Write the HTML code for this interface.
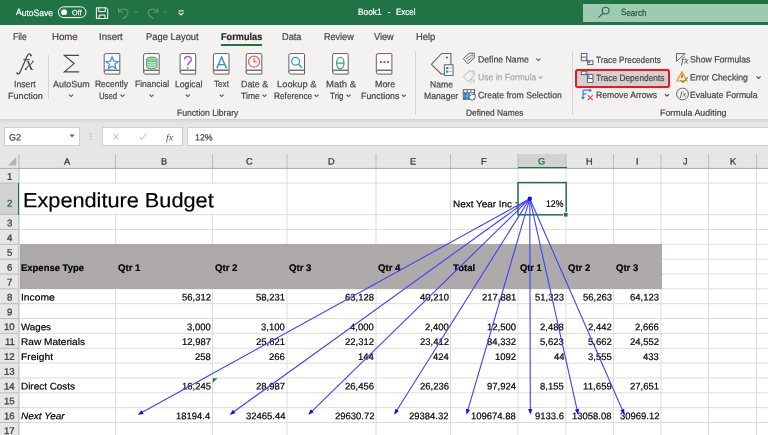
<!DOCTYPE html>
<html lang="en">
<head>
<meta charset="utf-8">
<title>Book1 - Excel</title>
<style>
html,body{margin:0;padding:0}
body{width:768px;height:435px;overflow:hidden;position:relative;background:#fff;font-family:"Liberation Sans",sans-serif;}
.a{position:absolute}
.t{position:absolute;white-space:pre;transform-origin:0 0;}
#w{position:absolute;left:0;top:0;width:768px;height:435px;overflow:hidden;will-change:transform;text-rendering:geometricPrecision;}
svg{position:absolute;overflow:visible}

</style>
</head>
<body>
<div id="w">
<div class="a" style="left:0px;top:0px;width:768px;height:25px;background:#217346;"></div>
<div class="a" style="left:583.3px;top:4px;width:184.7px;height:17.5px;background:#9ccbb1;"></div>
<div class="a" style="left:0px;top:25px;width:768px;height:93.6px;background:#f3f2f1;"></div>
<div class="a" style="left:0px;top:118.6px;width:768px;height:50.4px;background:#e6e6e6;"></div>
<div class="a" style="left:0px;top:118.6px;width:768px;height:5.4px;background:linear-gradient(#cfcecd,#dddcdc 35%,#e6e6e6);"></div>
<div class="a" style="left:220.7px;top:43.8px;width:41.3px;height:2.0px;background:#217346;"></div>
<div class="a" style="left:47.5px;top:55px;width:1.0px;height:44px;background:#d6d4d2;"></div>
<div class="a" style="left:415px;top:51px;width:1px;height:64px;background:#d6d4d2;"></div>
<div class="a" style="left:572px;top:51px;width:1px;height:64px;background:#d6d4d2;"></div>
<div class="a" style="left:574.6px;top:68.6px;width:95.2px;height:19.4px;background:#d3d1cf;box-sizing:border-box;border:2.1px solid #f8121c;border-radius:2.5px;"></div>
<div class="a" style="left:4px;top:127.3px;width:75.5px;height:18.7px;background:#fff;box-sizing:border-box;border:1px solid #cfcfcf;"></div>
<div class="a" style="left:102.4px;top:127.3px;width:81.0px;height:18.7px;background:#fff;box-sizing:border-box;border:1px solid #cfcfcf;"></div>
<div class="a" style="left:186.8px;top:127.3px;width:588.2px;height:18.7px;background:#fff;box-sizing:border-box;border:1px solid #cfcfcf;"></div>
<div class="a" style="left:0px;top:168px;width:19px;height:267px;background:#e6e6e6;"></div>
<div class="a" style="left:518px;top:154px;width:48px;height:14px;background:#d2d2d2;"></div>
<div class="a" style="left:0px;top:183.1px;width:19px;height:31.5px;background:#d2d2d2;"></div>
<svg width="768" height="435" viewBox="0 0 768 435" style="left:0;top:0"><line x1="115.5" y1="154.2" x2="115.5" y2="168" stroke="#bcbcbc" stroke-width="1"/><line x1="115.5" y1="169" x2="115.5" y2="435" stroke="#dddddd" stroke-width="1"/><line x1="212.5" y1="154.2" x2="212.5" y2="168" stroke="#bcbcbc" stroke-width="1"/><line x1="212.5" y1="169" x2="212.5" y2="435" stroke="#dddddd" stroke-width="1"/><line x1="287" y1="154.2" x2="287" y2="168" stroke="#bcbcbc" stroke-width="1"/><line x1="287" y1="169" x2="287" y2="435" stroke="#dddddd" stroke-width="1"/><line x1="376" y1="154.2" x2="376" y2="168" stroke="#bcbcbc" stroke-width="1"/><line x1="376" y1="169" x2="376" y2="435" stroke="#dddddd" stroke-width="1"/><line x1="450.5" y1="154.2" x2="450.5" y2="168" stroke="#bcbcbc" stroke-width="1"/><line x1="450.5" y1="169" x2="450.5" y2="435" stroke="#dddddd" stroke-width="1"/><line x1="518" y1="154.2" x2="518" y2="168" stroke="#bcbcbc" stroke-width="1"/><line x1="518" y1="169" x2="518" y2="435" stroke="#dddddd" stroke-width="1"/><line x1="566" y1="154.2" x2="566" y2="168" stroke="#bcbcbc" stroke-width="1"/><line x1="566" y1="169" x2="566" y2="435" stroke="#dddddd" stroke-width="1"/><line x1="613.5" y1="154.2" x2="613.5" y2="168" stroke="#bcbcbc" stroke-width="1"/><line x1="613.5" y1="169" x2="613.5" y2="435" stroke="#dddddd" stroke-width="1"/><line x1="661" y1="154.2" x2="661" y2="168" stroke="#bcbcbc" stroke-width="1"/><line x1="661" y1="169" x2="661" y2="435" stroke="#dddddd" stroke-width="1"/><line x1="708.6" y1="154.2" x2="708.6" y2="168" stroke="#bcbcbc" stroke-width="1"/><line x1="708.6" y1="169" x2="708.6" y2="435" stroke="#dddddd" stroke-width="1"/><line x1="756.6" y1="154.2" x2="756.6" y2="168" stroke="#bcbcbc" stroke-width="1"/><line x1="756.6" y1="169" x2="756.6" y2="435" stroke="#dddddd" stroke-width="1"/><line x1="0" y1="183.1" x2="18.5" y2="183.1" stroke="#bcbcbc" stroke-width="1"/><line x1="19.5" y1="183.1" x2="768" y2="183.1" stroke="#dddddd" stroke-width="1"/><line x1="0" y1="214.6" x2="18.5" y2="214.6" stroke="#bcbcbc" stroke-width="1"/><line x1="19.5" y1="214.6" x2="768" y2="214.6" stroke="#dddddd" stroke-width="1"/><line x1="0" y1="229.45" x2="18.5" y2="229.45" stroke="#bcbcbc" stroke-width="1"/><line x1="19.5" y1="229.45" x2="768" y2="229.45" stroke="#dddddd" stroke-width="1"/><line x1="0" y1="244.3" x2="18.5" y2="244.3" stroke="#bcbcbc" stroke-width="1"/><line x1="19.5" y1="244.3" x2="768" y2="244.3" stroke="#dddddd" stroke-width="1"/><line x1="0" y1="259.15" x2="18.5" y2="259.15" stroke="#bcbcbc" stroke-width="1"/><line x1="19.5" y1="259.15" x2="768" y2="259.15" stroke="#dddddd" stroke-width="1"/><line x1="0" y1="274.0" x2="18.5" y2="274.0" stroke="#bcbcbc" stroke-width="1"/><line x1="19.5" y1="274.0" x2="768" y2="274.0" stroke="#dddddd" stroke-width="1"/><line x1="0" y1="288.85" x2="18.5" y2="288.85" stroke="#bcbcbc" stroke-width="1"/><line x1="19.5" y1="288.85" x2="768" y2="288.85" stroke="#dddddd" stroke-width="1"/><line x1="0" y1="303.7" x2="18.5" y2="303.7" stroke="#bcbcbc" stroke-width="1"/><line x1="19.5" y1="303.7" x2="768" y2="303.7" stroke="#dddddd" stroke-width="1"/><line x1="0" y1="318.55" x2="18.5" y2="318.55" stroke="#bcbcbc" stroke-width="1"/><line x1="19.5" y1="318.55" x2="768" y2="318.55" stroke="#dddddd" stroke-width="1"/><line x1="0" y1="333.4" x2="18.5" y2="333.4" stroke="#bcbcbc" stroke-width="1"/><line x1="19.5" y1="333.4" x2="768" y2="333.4" stroke="#dddddd" stroke-width="1"/><line x1="0" y1="348.25" x2="18.5" y2="348.25" stroke="#bcbcbc" stroke-width="1"/><line x1="19.5" y1="348.25" x2="768" y2="348.25" stroke="#dddddd" stroke-width="1"/><line x1="0" y1="363.1" x2="18.5" y2="363.1" stroke="#bcbcbc" stroke-width="1"/><line x1="19.5" y1="363.1" x2="768" y2="363.1" stroke="#dddddd" stroke-width="1"/><line x1="0" y1="377.95" x2="18.5" y2="377.95" stroke="#bcbcbc" stroke-width="1"/><line x1="19.5" y1="377.95" x2="768" y2="377.95" stroke="#dddddd" stroke-width="1"/><line x1="0" y1="392.8" x2="18.5" y2="392.8" stroke="#bcbcbc" stroke-width="1"/><line x1="19.5" y1="392.8" x2="768" y2="392.8" stroke="#dddddd" stroke-width="1"/><line x1="0" y1="407.65" x2="18.5" y2="407.65" stroke="#bcbcbc" stroke-width="1"/><line x1="19.5" y1="407.65" x2="768" y2="407.65" stroke="#dddddd" stroke-width="1"/><line x1="0" y1="422.5" x2="18.5" y2="422.5" stroke="#bcbcbc" stroke-width="1"/><line x1="19.5" y1="422.5" x2="768" y2="422.5" stroke="#dddddd" stroke-width="1"/><line x1="0" y1="437.35" x2="18.5" y2="437.35" stroke="#bcbcbc" stroke-width="1"/><line x1="19.5" y1="437.35" x2="768" y2="437.35" stroke="#dddddd" stroke-width="1"/><line x1="0" y1="452.2" x2="18.5" y2="452.2" stroke="#bcbcbc" stroke-width="1"/><line x1="19.5" y1="452.2" x2="768" y2="452.2" stroke="#dddddd" stroke-width="1"/><line x1="19" y1="154.2" x2="19" y2="435" stroke="#b4b4b4" stroke-width="1"/><line x1="0" y1="168.4" x2="768" y2="168.4" stroke="#a9a9a9" stroke-width="1"/></svg>
<div class="a" style="left:100px;top:183.6px;width:130px;height:30.5px;background:#fff;"></div>
<div class="a" style="left:19.5px;top:244px;width:642.0px;height:45px;background:#aeaaaa;"></div>
<div class="a" style="left:518px;top:166.6px;width:48.5px;height:1.8px;background:#217346;"></div>
<div class="a" style="left:17.8px;top:183.1px;width:1.7px;height:32.0px;background:#217346;"></div>
<span class="t" style="left:16.00px;top:7.25px;font-size:9.2px;line-height:10px;color:#fff;-webkit-text-stroke:0.2px #fff;transform:translateY(0.50px) rotate(0.03deg) scaleX(0.9286);">AutoSave</span>
<span class="t" style="left:72.30px;top:8.25px;font-size:7.6px;line-height:9px;color:#fff;-webkit-text-stroke:0.2px #fff;transform:translateY(0.25px) rotate(0.03deg) scaleX(0.9500);">Off</span>
<span class="t" style="left:358.40px;top:7.25px;font-size:9.2px;line-height:10px;color:#fff;-webkit-text-stroke:0.2px #fff;transform:translateY(0.25px) rotate(0.03deg) scaleX(0.9055);">Book1</span>
<span class="t" style="left:387.90px;top:7.25px;font-size:9.2px;line-height:10px;color:#fff;-webkit-text-stroke:0.2px #fff;transform:translateY(0.25px) rotate(0.03deg) scaleX(0.7837);">-</span>
<span class="t" style="left:395.80px;top:7.25px;font-size:9.2px;line-height:10px;color:#fff;-webkit-text-stroke:0.2px #fff;transform:translateY(0.25px) rotate(0.03deg) scaleX(0.8679);">Excel</span>
<span class="t" style="left:620.70px;top:7.25px;font-size:9.2px;line-height:10px;color:#1d5436;-webkit-text-stroke:0.2px #1d5436;transform:translateY(0.50px) rotate(0.03deg) scaleX(0.8790);">Search</span>
<span class="t" style="left:12.70px;top:32.25px;font-size:9.9px;line-height:11px;color:#444444;-webkit-text-stroke:0.2px #444444;transform:translateY(0.00px) rotate(0.03deg) scaleX(0.8542);">File</span>
<span class="t" style="left:51.70px;top:32.25px;font-size:9.9px;line-height:11px;color:#444444;-webkit-text-stroke:0.2px #444444;transform:translateY(0.00px) rotate(0.03deg) scaleX(0.9718);">Home</span>
<span class="t" style="left:99.00px;top:32.25px;font-size:9.9px;line-height:11px;color:#444444;-webkit-text-stroke:0.2px #444444;transform:translateY(0.00px) rotate(0.03deg) scaleX(0.9594);">Insert</span>
<span class="t" style="left:146.00px;top:32.25px;font-size:9.9px;line-height:11px;color:#444444;-webkit-text-stroke:0.2px #444444;transform:translateY(0.00px) rotate(0.03deg) scaleX(0.9501);">Page Layout</span>
<span class="t" style="left:282.30px;top:32.25px;font-size:9.9px;line-height:11px;color:#444444;-webkit-text-stroke:0.2px #444444;transform:translateY(0.00px) rotate(0.03deg) scaleX(0.9300);">Data</span>
<span class="t" style="left:324.00px;top:32.25px;font-size:9.9px;line-height:11px;color:#444444;-webkit-text-stroke:0.2px #444444;transform:translateY(0.00px) rotate(0.03deg) scaleX(0.9169);">Review</span>
<span class="t" style="left:374.30px;top:32.25px;font-size:9.9px;line-height:11px;color:#444444;-webkit-text-stroke:0.2px #444444;transform:translateY(0.00px) rotate(0.03deg) scaleX(0.9277);">View</span>
<span class="t" style="left:415.70px;top:32.25px;font-size:9.9px;line-height:11px;color:#444444;-webkit-text-stroke:0.2px #444444;transform:translateY(0.00px) rotate(0.03deg) scaleX(0.9502);">Help</span>
<span class="t" style="left:220.70px;top:32.25px;font-size:9.9px;line-height:11px;color:#252423;-webkit-text-stroke:0.2px #252423;font-weight:700;transform:translateY(0.00px) rotate(0.03deg) scaleX(0.9291);">Formulas</span>
<span class="t" style="left:14.10px;top:79.25px;font-size:9.2px;line-height:10px;color:#444444;-webkit-text-stroke:0.2px #444444;transform:translateY(0.25px) rotate(0.03deg) scaleX(0.9441);">Insert</span>
<span class="t" style="left:7.60px;top:90.25px;font-size:9.2px;line-height:10px;color:#444444;-webkit-text-stroke:0.2px #444444;transform:translateY(1.00px) rotate(0.03deg) scaleX(0.9901);">Function</span>
<span class="t" style="left:53.10px;top:79.25px;font-size:9.2px;line-height:10px;color:#444444;-webkit-text-stroke:0.2px #444444;transform:translateY(0.25px) rotate(0.03deg) scaleX(0.9683);">AutoSum</span>
<span class="t" style="left:95.40px;top:79.25px;font-size:9.2px;line-height:10px;color:#444444;-webkit-text-stroke:0.2px #444444;transform:translateY(0.25px) rotate(0.03deg) scaleX(0.9231);">Recently</span>
<span class="t" style="left:98.60px;top:90.25px;font-size:9.2px;line-height:10px;color:#444444;-webkit-text-stroke:0.2px #444444;transform:translateY(1.00px) rotate(0.03deg) scaleX(0.8484);">Used</span>
<span class="t" style="left:134.70px;top:79.25px;font-size:9.2px;line-height:10px;color:#444444;-webkit-text-stroke:0.2px #444444;transform:translateY(0.25px) rotate(0.03deg) scaleX(0.9271);">Financial</span>
<span class="t" style="left:174.80px;top:79.25px;font-size:9.2px;line-height:10px;color:#444444;-webkit-text-stroke:0.2px #444444;transform:translateY(0.25px) rotate(0.03deg) scaleX(0.9408);">Logical</span>
<span class="t" style="left:214.10px;top:79.25px;font-size:9.2px;line-height:10px;color:#444444;-webkit-text-stroke:0.2px #444444;transform:translateY(0.25px) rotate(0.03deg) scaleX(0.8838);">Text</span>
<span class="t" style="left:240.60px;top:79.25px;font-size:9.2px;line-height:10px;color:#444444;-webkit-text-stroke:0.2px #444444;transform:translateY(0.25px) rotate(0.03deg) scaleX(0.9646);">Date &amp;</span>
<span class="t" style="left:241.20px;top:90.25px;font-size:9.2px;line-height:10px;color:#444444;-webkit-text-stroke:0.2px #444444;transform:translateY(1.00px) rotate(0.03deg) scaleX(0.9413);">Time</span>
<span class="t" style="left:277.00px;top:79.25px;font-size:9.2px;line-height:10px;color:#444444;-webkit-text-stroke:0.2px #444444;transform:translateY(0.25px) rotate(0.03deg) scaleX(1.0173);">Lookup &amp;</span>
<span class="t" style="left:273.70px;top:90.25px;font-size:9.2px;line-height:10px;color:#444444;-webkit-text-stroke:0.2px #444444;transform:translateY(1.00px) rotate(0.03deg) scaleX(0.9011);">Reference</span>
<span class="t" style="left:325.70px;top:79.25px;font-size:9.2px;line-height:10px;color:#444444;-webkit-text-stroke:0.2px #444444;transform:translateY(0.25px) rotate(0.03deg) scaleX(1.0340);">Math &amp;</span>
<span class="t" style="left:330.00px;top:90.25px;font-size:9.2px;line-height:10px;color:#444444;-webkit-text-stroke:0.2px #444444;transform:translateY(1.00px) rotate(0.03deg) scaleX(0.8783);">Trig</span>
<span class="t" style="left:374.80px;top:79.25px;font-size:9.2px;line-height:10px;color:#444444;-webkit-text-stroke:0.2px #444444;transform:translateY(0.25px) rotate(0.03deg) scaleX(0.9696);">More</span>
<span class="t" style="left:361.20px;top:90.25px;font-size:9.2px;line-height:10px;color:#444444;-webkit-text-stroke:0.2px #444444;transform:translateY(1.00px) rotate(0.03deg) scaleX(0.9663);">Functions</span>
<span class="t" style="left:430.00px;top:79.25px;font-size:9.2px;line-height:10px;color:#444444;-webkit-text-stroke:0.2px #444444;transform:translateY(0.50px) rotate(0.03deg) scaleX(0.9382);">Name</span>
<span class="t" style="left:423.80px;top:91.25px;font-size:9.2px;line-height:10px;color:#444444;-webkit-text-stroke:0.2px #444444;transform:translateY(0.00px) rotate(0.03deg) scaleX(0.9430);">Manager</span>
<span class="t" style="left:477.50px;top:54.25px;font-size:9.2px;line-height:10px;color:#444444;-webkit-text-stroke:0.2px #444444;transform:translateY(0.50px) rotate(0.03deg) scaleX(0.9473);">Define Name</span>
<span class="t" style="left:477.50px;top:90.25px;font-size:9.2px;line-height:10px;color:#444444;-webkit-text-stroke:0.2px #444444;transform:translateY(0.25px) rotate(0.03deg) scaleX(0.9431);">Create from Selection</span>
<span class="t" style="left:595.90px;top:54.25px;font-size:9.2px;line-height:10px;color:#444444;-webkit-text-stroke:0.2px #444444;transform:translateY(0.50px) rotate(0.03deg) scaleX(0.8979);">Trace Precedents</span>
<span class="t" style="left:595.90px;top:72.25px;font-size:9.2px;line-height:10px;color:#444444;-webkit-text-stroke:0.2px #444444;transform:translateY(0.50px) rotate(0.03deg) scaleX(0.9103);">Trace Dependents</span>
<span class="t" style="left:595.90px;top:89.25px;font-size:9.2px;line-height:10px;color:#444444;-webkit-text-stroke:0.2px #444444;transform:translateY(1.00px) rotate(0.03deg) scaleX(0.9423);">Remove Arrows</span>
<span class="t" style="left:690.40px;top:54.25px;font-size:9.2px;line-height:10px;color:#444444;-webkit-text-stroke:0.2px #444444;transform:translateY(0.50px) rotate(0.03deg) scaleX(0.9463);">Show Formulas</span>
<span class="t" style="left:690.40px;top:72.25px;font-size:9.2px;line-height:10px;color:#444444;-webkit-text-stroke:0.2px #444444;transform:translateY(0.50px) rotate(0.03deg) scaleX(0.9432);">Error Checking</span>
<span class="t" style="left:690.40px;top:89.25px;font-size:9.2px;line-height:10px;color:#444444;-webkit-text-stroke:0.2px #444444;transform:translateY(1.00px) rotate(0.03deg) scaleX(0.9387);">Evaluate Formula</span>
<span class="t" style="left:477.50px;top:72.25px;font-size:9.2px;line-height:10px;color:#a9a8a7;-webkit-text-stroke:0.2px #a9a8a7;transform:translateY(0.25px) rotate(0.03deg) scaleX(0.9358);">Use in Formula</span>
<span class="t" style="left:176.70px;top:107.25px;font-size:8.9px;line-height:10px;color:#444444;-webkit-text-stroke:0.2px #444444;transform:translateY(0.75px) rotate(0.03deg) scaleX(0.9632);">Function Library</span>
<span class="t" style="left:465.50px;top:107.25px;font-size:8.9px;line-height:10px;color:#444444;-webkit-text-stroke:0.2px #444444;transform:translateY(0.75px) rotate(0.03deg) scaleX(0.9400);">Defined Names</span>
<span class="t" style="left:660.40px;top:107.25px;font-size:8.9px;line-height:10px;color:#444444;-webkit-text-stroke:0.2px #444444;transform:translateY(0.75px) rotate(0.03deg) scaleX(0.9984);">Formula Auditing</span>
<span class="t" style="left:25.40px;top:53.25px;font-size:20.4px;line-height:22px;color:#4a4846;font-style:italic;font-family:'Liberation Serif',serif;transform:translateY(0.00px) rotate(0.03deg) scaleX(1.0000);">x</span>
<span class="t" style="left:8.80px;top:132.25px;font-size:9.2px;line-height:10px;color:#444444;-webkit-text-stroke:0.2px #444444;transform:translateY(0.50px) rotate(0.03deg) scaleX(0.9783);">G2</span>
<span class="t" style="left:195.40px;top:132.25px;font-size:9.2px;line-height:10px;color:#444444;-webkit-text-stroke:0.2px #444444;transform:translateY(0.50px) rotate(0.03deg) scaleX(0.9624);">12%</span>
<span class="t" style="left:64.18px;top:156.25px;font-size:9.2px;line-height:10px;color:#3c3c3c;-webkit-text-stroke:0.3px #3c3c3c;transform:translateY(0.50px) rotate(0.03deg) scaleX(1.0000);">A</span>
<span class="t" style="left:160.93px;top:156.25px;font-size:9.2px;line-height:10px;color:#3c3c3c;-webkit-text-stroke:0.3px #3c3c3c;transform:translateY(0.50px) rotate(0.03deg) scaleX(1.0000);">B</span>
<span class="t" style="left:246.43px;top:156.25px;font-size:9.2px;line-height:10px;color:#3c3c3c;-webkit-text-stroke:0.3px #3c3c3c;transform:translateY(0.50px) rotate(0.03deg) scaleX(1.0000);">C</span>
<span class="t" style="left:328.18px;top:156.25px;font-size:9.2px;line-height:10px;color:#3c3c3c;-webkit-text-stroke:0.3px #3c3c3c;transform:translateY(0.50px) rotate(0.03deg) scaleX(1.0000);">D</span>
<span class="t" style="left:410.18px;top:156.25px;font-size:9.2px;line-height:10px;color:#3c3c3c;-webkit-text-stroke:0.3px #3c3c3c;transform:translateY(0.50px) rotate(0.03deg) scaleX(1.0000);">E</span>
<span class="t" style="left:481.44px;top:156.25px;font-size:9.2px;line-height:10px;color:#3c3c3c;-webkit-text-stroke:0.3px #3c3c3c;transform:translateY(0.50px) rotate(0.03deg) scaleX(1.0000);">F</span>
<span class="t" style="left:538.42px;top:156.25px;font-size:9.2px;line-height:10px;color:#217346;-webkit-text-stroke:0.3px #217346;transform:translateY(0.50px) rotate(0.03deg) scaleX(1.0000);">G</span>
<span class="t" style="left:586.43px;top:156.25px;font-size:9.2px;line-height:10px;color:#3c3c3c;-webkit-text-stroke:0.3px #3c3c3c;transform:translateY(0.50px) rotate(0.03deg) scaleX(1.0000);">H</span>
<span class="t" style="left:635.97px;top:156.25px;font-size:9.2px;line-height:10px;color:#3c3c3c;-webkit-text-stroke:0.3px #3c3c3c;transform:translateY(0.50px) rotate(0.03deg) scaleX(1.0000);">I</span>
<span class="t" style="left:682.50px;top:156.25px;font-size:9.2px;line-height:10px;color:#3c3c3c;-webkit-text-stroke:0.3px #3c3c3c;transform:translateY(0.50px) rotate(0.03deg) scaleX(1.0000);">J</span>
<span class="t" style="left:729.53px;top:156.25px;font-size:9.2px;line-height:10px;color:#3c3c3c;-webkit-text-stroke:0.3px #3c3c3c;transform:translateY(0.50px) rotate(0.03deg) scaleX(1.0000);">K</span>
<span class="t" style="left:6.93px;top:171.25px;font-size:9.6px;line-height:11px;color:#3c3c3c;-webkit-text-stroke:0.3px #3c3c3c;transform:translateY(0.75px) rotate(0.03deg) scaleX(1.0000);">1</span>
<span class="t" style="left:6.93px;top:198.25px;font-size:9.6px;line-height:11px;color:#217346;-webkit-text-stroke:0.3px #217346;transform:translateY(0.50px) rotate(0.03deg) scaleX(1.0000);">2</span>
<span class="t" style="left:6.93px;top:218.25px;font-size:9.6px;line-height:11px;color:#3c3c3c;-webkit-text-stroke:0.3px #3c3c3c;transform:translateY(0.25px) rotate(0.03deg) scaleX(1.0000);">3</span>
<span class="t" style="left:6.93px;top:233.25px;font-size:9.6px;line-height:11px;color:#3c3c3c;-webkit-text-stroke:0.3px #3c3c3c;transform:translateY(0.00px) rotate(0.03deg) scaleX(1.0000);">4</span>
<span class="t" style="left:6.93px;top:247.25px;font-size:9.6px;line-height:11px;color:#3c3c3c;-webkit-text-stroke:0.3px #3c3c3c;transform:translateY(0.75px) rotate(0.03deg) scaleX(1.0000);">5</span>
<span class="t" style="left:6.93px;top:262.25px;font-size:9.6px;line-height:11px;color:#3c3c3c;-webkit-text-stroke:0.3px #3c3c3c;transform:translateY(0.75px) rotate(0.03deg) scaleX(1.0000);">6</span>
<span class="t" style="left:6.93px;top:277.25px;font-size:9.6px;line-height:11px;color:#3c3c3c;-webkit-text-stroke:0.3px #3c3c3c;transform:translateY(0.50px) rotate(0.03deg) scaleX(1.0000);">7</span>
<span class="t" style="left:6.93px;top:292.25px;font-size:9.6px;line-height:11px;color:#3c3c3c;-webkit-text-stroke:0.3px #3c3c3c;transform:translateY(0.50px) rotate(0.03deg) scaleX(1.0000);">8</span>
<span class="t" style="left:6.93px;top:307.25px;font-size:9.6px;line-height:11px;color:#3c3c3c;-webkit-text-stroke:0.3px #3c3c3c;transform:translateY(0.25px) rotate(0.03deg) scaleX(1.0000);">9</span>
<span class="t" style="left:4.26px;top:322.25px;font-size:9.6px;line-height:11px;color:#3c3c3c;-webkit-text-stroke:0.3px #3c3c3c;transform:translateY(0.00px) rotate(0.03deg) scaleX(1.0000);">10</span>
<span class="t" style="left:4.62px;top:336.25px;font-size:9.6px;line-height:11px;color:#3c3c3c;-webkit-text-stroke:0.3px #3c3c3c;transform:translateY(1.00px) rotate(0.03deg) scaleX(1.0000);">11</span>
<span class="t" style="left:4.26px;top:351.25px;font-size:9.6px;line-height:11px;color:#3c3c3c;-webkit-text-stroke:0.3px #3c3c3c;transform:translateY(0.75px) rotate(0.03deg) scaleX(1.0000);">12</span>
<span class="t" style="left:4.26px;top:366.25px;font-size:9.6px;line-height:11px;color:#3c3c3c;-webkit-text-stroke:0.3px #3c3c3c;transform:translateY(0.75px) rotate(0.03deg) scaleX(1.0000);">13</span>
<span class="t" style="left:4.26px;top:381.25px;font-size:9.6px;line-height:11px;color:#3c3c3c;-webkit-text-stroke:0.3px #3c3c3c;transform:translateY(0.50px) rotate(0.03deg) scaleX(1.0000);">14</span>
<span class="t" style="left:4.26px;top:396.25px;font-size:9.6px;line-height:11px;color:#3c3c3c;-webkit-text-stroke:0.3px #3c3c3c;transform:translateY(0.25px) rotate(0.03deg) scaleX(1.0000);">15</span>
<span class="t" style="left:4.26px;top:411.25px;font-size:9.6px;line-height:11px;color:#3c3c3c;-webkit-text-stroke:0.3px #3c3c3c;transform:translateY(0.25px) rotate(0.03deg) scaleX(1.0000);">16</span>
<span class="t" style="left:4.26px;top:426.25px;font-size:9.6px;line-height:11px;color:#3c3c3c;-webkit-text-stroke:0.3px #3c3c3c;transform:translateY(0.00px) rotate(0.03deg) scaleX(1.0000);">17</span>
<span class="t" style="left:23.30px;top:189.25px;font-size:20.6px;line-height:23px;color:#000;-webkit-text-stroke:0.2px #000;transform:translateY(0.25px) rotate(0.03deg) scaleX(1.0541);">Expenditure Budget</span>
<span class="t" style="left:453.00px;top:199.25px;font-size:9.6px;line-height:11px;color:#000;-webkit-text-stroke:0.2px #000;transform:translateY(0.25px) rotate(0.03deg) scaleX(1.0352);">Next Year Inc :</span>
<span class="t" style="left:546.00px;top:199.25px;font-size:9.6px;line-height:11px;color:#000;-webkit-text-stroke:0.2px #000;transform:translateY(0.25px) rotate(0.03deg) scaleX(0.9061);">12%</span>
<span class="t" style="left:21.00px;top:263.25px;font-size:9.6px;line-height:11px;color:#000;-webkit-text-stroke:0.2px #000;font-weight:700;transform:translateY(0.00px) rotate(0.03deg) scaleX(0.9873);">Expense Type</span>
<span class="t" style="left:117.50px;top:263.25px;font-size:9.6px;line-height:11px;color:#000;-webkit-text-stroke:0.2px #000;font-weight:700;transform:translateY(0.00px) rotate(0.03deg) scaleX(1.0042);">Qtr 1</span>
<span class="t" style="left:214.50px;top:263.25px;font-size:9.6px;line-height:11px;color:#000;-webkit-text-stroke:0.2px #000;font-weight:700;transform:translateY(0.00px) rotate(0.03deg) scaleX(1.0042);">Qtr 2</span>
<span class="t" style="left:289.00px;top:263.25px;font-size:9.6px;line-height:11px;color:#000;-webkit-text-stroke:0.2px #000;font-weight:700;transform:translateY(0.00px) rotate(0.03deg) scaleX(1.0042);">Qtr 3</span>
<span class="t" style="left:378.00px;top:263.25px;font-size:9.6px;line-height:11px;color:#000;-webkit-text-stroke:0.2px #000;font-weight:700;transform:translateY(0.00px) rotate(0.03deg) scaleX(1.0042);">Qtr 4</span>
<span class="t" style="left:453.00px;top:263.25px;font-size:9.6px;line-height:11px;color:#000;-webkit-text-stroke:0.2px #000;font-weight:700;transform:translateY(0.00px) rotate(0.03deg) scaleX(0.9992);">Total</span>
<span class="t" style="left:520.20px;top:263.25px;font-size:9.6px;line-height:11px;color:#000;-webkit-text-stroke:0.2px #000;font-weight:700;transform:translateY(0.00px) rotate(0.03deg) scaleX(0.9729);">Qtr 1</span>
<span class="t" style="left:568.10px;top:263.25px;font-size:9.6px;line-height:11px;color:#000;-webkit-text-stroke:0.2px #000;font-weight:700;transform:translateY(0.00px) rotate(0.03deg) scaleX(0.9908);">Qtr 2</span>
<span class="t" style="left:615.80px;top:263.25px;font-size:9.6px;line-height:11px;color:#000;-webkit-text-stroke:0.2px #000;font-weight:700;transform:translateY(0.00px) rotate(0.03deg) scaleX(0.9908);">Qtr 3</span>
<span class="t" style="left:21.00px;top:292.25px;font-size:9.6px;line-height:11px;color:#000;-webkit-text-stroke:0.2px #000;transform:translateY(0.50px) rotate(0.03deg) scaleX(1.0709);">Income</span>
<span class="t" style="left:21.00px;top:322.25px;font-size:9.6px;line-height:11px;color:#000;-webkit-text-stroke:0.2px #000;transform:translateY(0.25px) rotate(0.03deg) scaleX(1.0164);">Wages</span>
<span class="t" style="left:21.00px;top:337.25px;font-size:9.6px;line-height:11px;color:#000;-webkit-text-stroke:0.2px #000;transform:translateY(0.00px) rotate(0.03deg) scaleX(1.0530);">Raw Materials</span>
<span class="t" style="left:21.00px;top:351.25px;font-size:9.6px;line-height:11px;color:#000;-webkit-text-stroke:0.2px #000;transform:translateY(1.00px) rotate(0.03deg) scaleX(1.0717);">Freight</span>
<span class="t" style="left:21.00px;top:381.25px;font-size:9.6px;line-height:11px;color:#000;-webkit-text-stroke:0.2px #000;transform:translateY(0.50px) rotate(0.03deg) scaleX(1.0335);">Direct Costs</span>
<span class="t" style="left:21.00px;top:411.25px;font-size:9.6px;line-height:11px;color:#000;-webkit-text-stroke:0.2px #000;font-style:italic;transform:translateY(0.25px) rotate(0.03deg) scaleX(1.0413);">Next Year</span>
<span class="t" style="left:181.65px;top:292.25px;font-size:9.6px;line-height:11px;color:#000;-webkit-text-stroke:0.2px #000;transform:translateY(0.50px) rotate(0.03deg) scaleX(0.9866);">56,312</span>
<span class="t" style="left:256.15px;top:292.25px;font-size:9.6px;line-height:11px;color:#000;-webkit-text-stroke:0.2px #000;transform:translateY(0.50px) rotate(0.03deg) scaleX(0.9866);">58,231</span>
<span class="t" style="left:345.15px;top:292.25px;font-size:9.6px;line-height:11px;color:#000;-webkit-text-stroke:0.2px #000;transform:translateY(0.50px) rotate(0.03deg) scaleX(0.9866);">63,128</span>
<span class="t" style="left:419.65px;top:292.25px;font-size:9.6px;line-height:11px;color:#000;-webkit-text-stroke:0.2px #000;transform:translateY(0.50px) rotate(0.03deg) scaleX(0.9866);">40,210</span>
<span class="t" style="left:481.88px;top:292.25px;font-size:9.6px;line-height:11px;color:#000;-webkit-text-stroke:0.2px #000;transform:translateY(0.50px) rotate(0.03deg) scaleX(0.9865);">217,881</span>
<span class="t" style="left:535.15px;top:292.25px;font-size:9.6px;line-height:11px;color:#000;-webkit-text-stroke:0.2px #000;transform:translateY(0.50px) rotate(0.03deg) scaleX(0.9866);">51,323</span>
<span class="t" style="left:582.65px;top:292.25px;font-size:9.6px;line-height:11px;color:#000;-webkit-text-stroke:0.2px #000;transform:translateY(0.50px) rotate(0.03deg) scaleX(0.9866);">56,263</span>
<span class="t" style="left:630.15px;top:292.25px;font-size:9.6px;line-height:11px;color:#000;-webkit-text-stroke:0.2px #000;transform:translateY(0.50px) rotate(0.03deg) scaleX(0.9866);">64,123</span>
<span class="t" style="left:186.92px;top:322.25px;font-size:9.6px;line-height:11px;color:#000;-webkit-text-stroke:0.2px #000;transform:translateY(0.25px) rotate(0.03deg) scaleX(0.9860);">3,000</span>
<span class="t" style="left:261.42px;top:322.25px;font-size:9.6px;line-height:11px;color:#000;-webkit-text-stroke:0.2px #000;transform:translateY(0.25px) rotate(0.03deg) scaleX(0.9860);">3,100</span>
<span class="t" style="left:350.42px;top:322.25px;font-size:9.6px;line-height:11px;color:#000;-webkit-text-stroke:0.2px #000;transform:translateY(0.25px) rotate(0.03deg) scaleX(0.9860);">4,000</span>
<span class="t" style="left:424.92px;top:322.25px;font-size:9.6px;line-height:11px;color:#000;-webkit-text-stroke:0.2px #000;transform:translateY(0.25px) rotate(0.03deg) scaleX(0.9860);">2,400</span>
<span class="t" style="left:487.15px;top:322.25px;font-size:9.6px;line-height:11px;color:#000;-webkit-text-stroke:0.2px #000;transform:translateY(0.25px) rotate(0.03deg) scaleX(0.9866);">12,500</span>
<span class="t" style="left:540.42px;top:322.25px;font-size:9.6px;line-height:11px;color:#000;-webkit-text-stroke:0.2px #000;transform:translateY(0.25px) rotate(0.03deg) scaleX(0.9860);">2,488</span>
<span class="t" style="left:587.92px;top:322.25px;font-size:9.6px;line-height:11px;color:#000;-webkit-text-stroke:0.2px #000;transform:translateY(0.25px) rotate(0.03deg) scaleX(0.9860);">2,442</span>
<span class="t" style="left:635.42px;top:322.25px;font-size:9.6px;line-height:11px;color:#000;-webkit-text-stroke:0.2px #000;transform:translateY(0.25px) rotate(0.03deg) scaleX(0.9860);">2,666</span>
<span class="t" style="left:181.65px;top:337.25px;font-size:9.6px;line-height:11px;color:#000;-webkit-text-stroke:0.2px #000;transform:translateY(0.00px) rotate(0.03deg) scaleX(0.9866);">12,987</span>
<span class="t" style="left:256.15px;top:337.25px;font-size:9.6px;line-height:11px;color:#000;-webkit-text-stroke:0.2px #000;transform:translateY(0.00px) rotate(0.03deg) scaleX(0.9866);">25,621</span>
<span class="t" style="left:345.15px;top:337.25px;font-size:9.6px;line-height:11px;color:#000;-webkit-text-stroke:0.2px #000;transform:translateY(0.00px) rotate(0.03deg) scaleX(0.9866);">22,312</span>
<span class="t" style="left:419.65px;top:337.25px;font-size:9.6px;line-height:11px;color:#000;-webkit-text-stroke:0.2px #000;transform:translateY(0.00px) rotate(0.03deg) scaleX(0.9866);">23,412</span>
<span class="t" style="left:487.15px;top:337.25px;font-size:9.6px;line-height:11px;color:#000;-webkit-text-stroke:0.2px #000;transform:translateY(0.00px) rotate(0.03deg) scaleX(0.9866);">84,332</span>
<span class="t" style="left:540.42px;top:337.25px;font-size:9.6px;line-height:11px;color:#000;-webkit-text-stroke:0.2px #000;transform:translateY(0.00px) rotate(0.03deg) scaleX(0.9860);">5,623</span>
<span class="t" style="left:587.92px;top:337.25px;font-size:9.6px;line-height:11px;color:#000;-webkit-text-stroke:0.2px #000;transform:translateY(0.00px) rotate(0.03deg) scaleX(0.9860);">5,662</span>
<span class="t" style="left:630.15px;top:337.25px;font-size:9.6px;line-height:11px;color:#000;-webkit-text-stroke:0.2px #000;transform:translateY(0.00px) rotate(0.03deg) scaleX(0.9866);">24,552</span>
<span class="t" style="left:194.79px;top:351.25px;font-size:9.6px;line-height:11px;color:#000;-webkit-text-stroke:0.2px #000;transform:translateY(1.00px) rotate(0.03deg) scaleX(0.9872);">258</span>
<span class="t" style="left:269.29px;top:351.25px;font-size:9.6px;line-height:11px;color:#000;-webkit-text-stroke:0.2px #000;transform:translateY(1.00px) rotate(0.03deg) scaleX(0.9872);">266</span>
<span class="t" style="left:358.29px;top:351.25px;font-size:9.6px;line-height:11px;color:#000;-webkit-text-stroke:0.2px #000;transform:translateY(1.00px) rotate(0.03deg) scaleX(0.9872);">144</span>
<span class="t" style="left:432.79px;top:351.25px;font-size:9.6px;line-height:11px;color:#000;-webkit-text-stroke:0.2px #000;transform:translateY(1.00px) rotate(0.03deg) scaleX(0.9872);">424</span>
<span class="t" style="left:495.02px;top:351.25px;font-size:9.6px;line-height:11px;color:#000;-webkit-text-stroke:0.2px #000;transform:translateY(1.00px) rotate(0.03deg) scaleX(0.9876);">1092</span>
<span class="t" style="left:553.56px;top:351.25px;font-size:9.6px;line-height:11px;color:#000;-webkit-text-stroke:0.2px #000;transform:translateY(1.00px) rotate(0.03deg) scaleX(0.9876);">44</span>
<span class="t" style="left:587.92px;top:351.25px;font-size:9.6px;line-height:11px;color:#000;-webkit-text-stroke:0.2px #000;transform:translateY(1.00px) rotate(0.03deg) scaleX(0.9860);">3,555</span>
<span class="t" style="left:643.29px;top:351.25px;font-size:9.6px;line-height:11px;color:#000;-webkit-text-stroke:0.2px #000;transform:translateY(1.00px) rotate(0.03deg) scaleX(0.9872);">433</span>
<span class="t" style="left:181.65px;top:381.25px;font-size:9.6px;line-height:11px;color:#000;-webkit-text-stroke:0.2px #000;transform:translateY(0.50px) rotate(0.03deg) scaleX(0.9866);">16,245</span>
<span class="t" style="left:256.15px;top:381.25px;font-size:9.6px;line-height:11px;color:#000;-webkit-text-stroke:0.2px #000;transform:translateY(0.50px) rotate(0.03deg) scaleX(0.9866);">28,987</span>
<span class="t" style="left:345.15px;top:381.25px;font-size:9.6px;line-height:11px;color:#000;-webkit-text-stroke:0.2px #000;transform:translateY(0.50px) rotate(0.03deg) scaleX(0.9866);">26,456</span>
<span class="t" style="left:419.65px;top:381.25px;font-size:9.6px;line-height:11px;color:#000;-webkit-text-stroke:0.2px #000;transform:translateY(0.50px) rotate(0.03deg) scaleX(0.9866);">26,236</span>
<span class="t" style="left:487.15px;top:381.25px;font-size:9.6px;line-height:11px;color:#000;-webkit-text-stroke:0.2px #000;transform:translateY(0.50px) rotate(0.03deg) scaleX(0.9866);">97,924</span>
<span class="t" style="left:540.42px;top:381.25px;font-size:9.6px;line-height:11px;color:#000;-webkit-text-stroke:0.2px #000;transform:translateY(0.50px) rotate(0.03deg) scaleX(0.9860);">8,155</span>
<span class="t" style="left:582.65px;top:381.25px;font-size:9.6px;line-height:11px;color:#000;-webkit-text-stroke:0.2px #000;transform:translateY(0.50px) rotate(0.03deg) scaleX(1.0108);">11,659</span>
<span class="t" style="left:630.15px;top:381.25px;font-size:9.6px;line-height:11px;color:#000;-webkit-text-stroke:0.2px #000;transform:translateY(0.50px) rotate(0.03deg) scaleX(0.9866);">27,651</span>
<span class="t" style="left:176.38px;top:411.25px;font-size:9.6px;line-height:11px;color:#000;-webkit-text-stroke:0.2px #000;transform:translateY(0.25px) rotate(0.03deg) scaleX(0.9865);">18194.4</span>
<span class="t" style="left:245.61px;top:411.25px;font-size:9.6px;line-height:11px;color:#000;-webkit-text-stroke:0.2px #000;transform:translateY(0.25px) rotate(0.03deg) scaleX(0.9869);">32465.44</span>
<span class="t" style="left:334.61px;top:411.25px;font-size:9.6px;line-height:11px;color:#000;-webkit-text-stroke:0.2px #000;transform:translateY(0.25px) rotate(0.03deg) scaleX(0.9869);">29630.72</span>
<span class="t" style="left:409.11px;top:411.25px;font-size:9.6px;line-height:11px;color:#000;-webkit-text-stroke:0.2px #000;transform:translateY(0.25px) rotate(0.03deg) scaleX(0.9869);">29384.32</span>
<span class="t" style="left:471.34px;top:411.25px;font-size:9.6px;line-height:11px;color:#000;-webkit-text-stroke:0.2px #000;transform:translateY(0.25px) rotate(0.03deg) scaleX(0.9868);">109674.88</span>
<span class="t" style="left:535.15px;top:411.25px;font-size:9.6px;line-height:11px;color:#000;-webkit-text-stroke:0.2px #000;transform:translateY(0.25px) rotate(0.03deg) scaleX(0.9866);">9133.6</span>
<span class="t" style="left:572.11px;top:411.25px;font-size:9.6px;line-height:11px;color:#000;-webkit-text-stroke:0.2px #000;transform:translateY(0.25px) rotate(0.03deg) scaleX(0.9869);">13058.08</span>
<span class="t" style="left:619.61px;top:411.25px;font-size:9.6px;line-height:11px;color:#000;-webkit-text-stroke:0.2px #000;transform:translateY(0.25px) rotate(0.03deg) scaleX(0.9869);">30969.12</span>
<span class="t" style="left:470.30px;top:77.25px;font-size:6.5px;line-height:7px;color:#a9a8a7;font-style:italic;font-family:'Liberation Serif',serif;transform:translateY(0.50px) rotate(0.03deg) scaleX(1.1269);">fx</span>
<span class="t" style="left:680.60px;top:55.25px;font-size:9.6px;line-height:11px;color:#4a4846;font-style:italic;font-family:'Liberation Serif',serif;transform:translateY(0.50px) rotate(0.03deg) scaleX(1.0955);">fx</span>
<span class="t" style="left:679.60px;top:89.25px;font-size:7.8px;line-height:9px;color:#4a4846;font-style:italic;font-family:'Liberation Serif',serif;transform:translateY(0.50px) rotate(0.03deg) scaleX(1.0992);">fx</span>
<span class="t" style="left:166.20px;top:132.25px;font-size:9.6px;line-height:11px;color:#555;font-style:italic;font-family:'Liberation Serif',serif;transform:translateY(0.50px) rotate(0.03deg) scaleX(1.0378);">fx</span>
<svg width="768" height="435" viewBox="0 0 768 435" style="left:0;top:0">
<rect x="518" y="182.6" width="48.2" height="32.2" fill="none" stroke="#217346" stroke-width="1.5"/>
<rect x="563.6" y="212.6" width="4.4" height="4.4" fill="#217346" stroke="#fff" stroke-width="0.8"/>
<path d="M212.9,378.34999999999997 h4.6 l-4.6,4.4 z" stroke="none" fill="#107c41" stroke-width="1" />
<line x1="529.8" y1="198.7" x2="141.80" y2="412.53" stroke="#4040ff" stroke-width="1.1"/>
<path d="M137.69,414.80 L141.66,410.21 L143.69,413.89 Z" stroke="none" fill="#0c0cff" stroke-width="1" />
<line x1="529.8" y1="198.7" x2="233.43" y2="412.05" stroke="#4040ff" stroke-width="1.1"/>
<path d="M229.61,414.80 L233.01,409.77 L235.46,413.17 Z" stroke="none" fill="#0c0cff" stroke-width="1" />
<line x1="529.8" y1="198.7" x2="311.54" y2="411.52" stroke="#4040ff" stroke-width="1.1"/>
<path d="M308.17,414.80 L310.79,409.32 L313.72,412.32 Z" stroke="none" fill="#0c0cff" stroke-width="1" />
<line x1="529.8" y1="198.7" x2="396.57" y2="410.82" stroke="#4040ff" stroke-width="1.1"/>
<path d="M394.07,414.80 L395.33,408.86 L398.88,411.09 Z" stroke="none" fill="#0c0cff" stroke-width="1" />
<line x1="529.8" y1="198.7" x2="467.73" y2="410.29" stroke="#4040ff" stroke-width="1.1"/>
<path d="M466.41,414.80 L466.00,408.74 L470.03,409.92 Z" stroke="none" fill="#0c0cff" stroke-width="1" />
<line x1="529.8" y1="198.7" x2="530.29" y2="410.10" stroke="#4040ff" stroke-width="1.1"/>
<path d="M530.30,414.80 L528.19,409.10 L532.39,409.10 Z" stroke="none" fill="#0c0cff" stroke-width="1" />
<line x1="529.8" y1="198.7" x2="577.20" y2="410.21" stroke="#4040ff" stroke-width="1.1"/>
<path d="M578.22,414.80 L574.93,409.70 L579.03,408.78 Z" stroke="none" fill="#0c0cff" stroke-width="1" />
<line x1="529.8" y1="198.7" x2="622.65" y2="410.50" stroke="#4040ff" stroke-width="1.1"/>
<path d="M624.54,414.80 L620.33,410.42 L624.17,408.74 Z" stroke="none" fill="#0c0cff" stroke-width="1" />
<circle cx="529.8" cy="198.7" r="2.2" fill="#0c0cff"/>
<path d="M69.00,94.60 L71.00,96.60 L73.00,94.60" stroke="#504e4c" fill="none" stroke-width="1.05" />
<path d="M120.50,94.60 L122.50,96.60 L124.50,94.60" stroke="#504e4c" fill="none" stroke-width="1.05" />
<path d="M149.50,94.60 L151.50,96.60 L153.50,94.60" stroke="#504e4c" fill="none" stroke-width="1.05" />
<path d="M185.80,94.60 L187.80,96.60 L189.80,94.60" stroke="#504e4c" fill="none" stroke-width="1.05" />
<path d="M219.70,94.60 L221.70,96.60 L223.70,94.60" stroke="#504e4c" fill="none" stroke-width="1.05" />
<path d="M262.50,94.60 L264.50,96.60 L266.50,94.60" stroke="#504e4c" fill="none" stroke-width="1.05" />
<path d="M314.50,94.60 L316.50,96.60 L318.50,94.60" stroke="#504e4c" fill="none" stroke-width="1.05" />
<path d="M346.50,94.60 L348.50,96.60 L350.50,94.60" stroke="#504e4c" fill="none" stroke-width="1.05" />
<path d="M401.80,94.60 L403.80,96.60 L405.80,94.60" stroke="#504e4c" fill="none" stroke-width="1.05" />
<path d="M536.30,58.60 L538.30,60.60 L540.30,58.60" stroke="#504e4c" fill="none" stroke-width="1.05" />
<path d="M538.50,76.40 L540.50,78.40 L542.50,76.40" stroke="#a9a8a7" fill="none" stroke-width="1.05" />
<path d="M665.00,94.20 L667.00,96.20 L669.00,94.20" stroke="#504e4c" fill="none" stroke-width="1.05" />
<path d="M756.60,76.40 L758.60,78.40 L760.60,76.40" stroke="#504e4c" fill="none" stroke-width="1.05" />
<rect x="58.4" y="6.8" width="27.6" height="10.8" rx="5.4" fill="none" stroke="#fff" stroke-width="1"/>
<circle cx="64.1" cy="12.2" r="2.9" fill="#fff"/>
<path d="M96.4,7.8 H106.3 L107.7,9.2 V18.5 H96.4 Z" stroke="#fff" fill="none" stroke-width="1" />
<path d="M98.8,7.8 V11.6 H105.3 V7.8" stroke="#fff" fill="none" stroke-width="1" />
<path d="M99.1,18.5 V15.1 H105 V18.5" stroke="#fff" fill="none" stroke-width="1" />
<path d="M118.6,7.6 V12 H123" stroke="#5f9c7c" fill="none" stroke-width="1.1" />
<path d="M118.8,11.8 C121,8.6 125.6,8 127.6,10.8 C129.4,13.6 126.5,16.2 123,18.8" stroke="#5f9c7c" fill="none" stroke-width="1.1" />
<path d="M157.6,7.6 V12 H153.2" stroke="#5f9c7c" fill="none" stroke-width="1.1" />
<path d="M157.4,11.8 C155.2,8.6 150.6,8 148.6,10.8 C146.8,13.6 149.7,16.2 153.2,18.8" stroke="#5f9c7c" fill="none" stroke-width="1.1" />
<path d="M134.20,11.30 L136.00,13.10 L137.80,11.30" stroke="#5f9c7c" fill="none" stroke-width="1.0" />
<path d="M162.90,11.30 L164.70,13.10 L166.50,11.30" stroke="#5f9c7c" fill="none" stroke-width="1.0" />
<path d="M178.6,10.9 H183.6" stroke="#fff" fill="none" stroke-width="1.1" />
<path d="M178.6,12.7 L181.1,15 L183.6,12.7" stroke="#fff" fill="none" stroke-width="1.1" />
<circle cx="605.6" cy="10.6" r="3.4" fill="none" stroke="#2a6546" stroke-width="1.1"/>
<path d="M603.2,13.1 L598.4,17.6" stroke="#2a6546" fill="none" stroke-width="1.2" />
<path d="M79.1,55.4 H64.4 L74.1,63.6 L64.4,71.9 H79.1" stroke="#484644" fill="none" stroke-width="1.2" stroke-linejoin="miter"/>
<path d="M31,55.7 C30.9,53.5 28.4,53.1 27.4,55.6 L20.6,71 C19.8,73.2 18.6,74.4 17.3,73.7" stroke="#4a4846" fill="none" stroke-width="1.25" stroke-linecap="round"/>
<circle cx="30.9" cy="55.5" r="0.85" fill="#4a4846"/>
<circle cx="17.1" cy="73.1" r="0.85" fill="#4a4846"/>
<path d="M23.3,59.6 H29.9" stroke="#4a4846" fill="none" stroke-width="1.0" />
<path d="M104.2,55.2 Q104.2,53.6 105.8,53.6 H119.0 Q119.8,53.6 119.8,54.4 V74.1 H106.2 Q104.2,74.1 104.2,72.1 Z" stroke="#626060" fill="#fff" stroke-width="1.0" />
<path d="M119.8,70.39999999999999 H106.2 Q104.2,70.39999999999999 104.2,72.19999999999999" stroke="#626060" fill="none" stroke-width="1.0" />
<path d="M104.7,69.5 H119.3" stroke="#b5b3b1" fill="none" stroke-width="0.9" />
<polygon points="112.10,57.00 113.80,61.05 118.19,61.42 114.86,64.30 115.86,68.58 112.10,66.30 108.34,68.58 109.34,64.30 106.01,61.42 110.40,61.05" fill="#fff" stroke="#3a96dd" stroke-width="1.3" stroke-linejoin="miter"/>
<path d="M143.6,55.2 Q143.6,53.6 145.2,53.6 H158.39999999999998 Q159.2,53.6 159.2,54.4 V74.1 H145.6 Q143.6,74.1 143.6,72.1 Z" stroke="#626060" fill="#fff" stroke-width="1.0" />
<path d="M159.2,70.39999999999999 H145.6 Q143.6,70.39999999999999 143.6,72.19999999999999" stroke="#626060" fill="none" stroke-width="1.0" />
<path d="M144.1,69.5 H158.7" stroke="#b5b3b1" fill="none" stroke-width="0.9" />
<path d="M146.6,59.4 V66.2 A5.2,2.4 0 0 0 157,66.2 V59.4" stroke="#4aa564" fill="#e3f3e6" stroke-width="0.9" />
<path d="M146.6,61.6 A5.2,2.4 0 0 0 157,61.6" stroke="#4aa564" fill="none" stroke-width="0.9" />
<path d="M146.6,63.9 A5.2,2.4 0 0 0 157,63.9" stroke="#4aa564" fill="none" stroke-width="0.9" />
<path d="M146.6,66.2 A5.2,2.4 0 0 0 157,66.2" stroke="#4aa564" fill="none" stroke-width="0.9" />
<ellipse cx="151.8" cy="59.4" rx="5.2" ry="2.4" fill="#8fd3a0" stroke="#4aa564" stroke-width="0.9"/>
<path d="M180.1,55.2 Q180.1,53.6 181.7,53.6 H194.89999999999998 Q195.7,53.6 195.7,54.4 V74.1 H182.1 Q180.1,74.1 180.1,72.1 Z" stroke="#626060" fill="#fff" stroke-width="1.0" />
<path d="M195.7,70.39999999999999 H182.1 Q180.1,70.39999999999999 180.1,72.19999999999999" stroke="#626060" fill="none" stroke-width="1.0" />
<path d="M180.6,69.5 H195.2" stroke="#b5b3b1" fill="none" stroke-width="0.9" />
<path d="M184.6,59.6 C184.6,55.6 191.4,55.6 191.4,59.4 C191.4,62.2 187.7,62.2 187.7,65.6" stroke="#b455c8" fill="none" stroke-width="1.5" />
<rect x="187" y="67.2" width="1.5" height="1.6" fill="#b455c8"/>
<path d="M213.4,55.2 Q213.4,53.6 215.0,53.6 H228.2 Q229.0,53.6 229.0,54.4 V74.1 H215.4 Q213.4,74.1 213.4,72.1 Z" stroke="#626060" fill="#fff" stroke-width="1.0" />
<path d="M229.0,70.39999999999999 H215.4 Q213.4,70.39999999999999 213.4,72.19999999999999" stroke="#626060" fill="none" stroke-width="1.0" />
<path d="M213.9,69.5 H228.5" stroke="#b5b3b1" fill="none" stroke-width="0.9" />
<path d="M216.8,68.4 L221.6,57 L226.4,68.4 M218.5,64.6 H224.7" stroke="#2e8fd8" fill="none" stroke-width="1.45" />
<path d="M246.2,55.2 Q246.2,53.6 247.79999999999998,53.6 H261.0 Q261.8,53.6 261.8,54.4 V74.1 H248.2 Q246.2,74.1 246.2,72.1 Z" stroke="#626060" fill="#fff" stroke-width="1.0" />
<path d="M261.8,70.39999999999999 H248.2 Q246.2,70.39999999999999 246.2,72.19999999999999" stroke="#626060" fill="none" stroke-width="1.0" />
<path d="M246.7,69.5 H261.3" stroke="#b5b3b1" fill="none" stroke-width="0.9" />
<circle cx="254" cy="61.7" r="5.5" fill="#fff" stroke="#ee5f5a" stroke-width="1.3"/>
<path d="M254,58 V61.9 H256.8" stroke="#ee5f5a" fill="none" stroke-width="1.25" />
<path d="M288.9,55.2 Q288.9,53.6 290.5,53.6 H303.7 Q304.5,53.6 304.5,54.4 V74.1 H290.9 Q288.9,74.1 288.9,72.1 Z" stroke="#626060" fill="#fff" stroke-width="1.0" />
<path d="M304.5,70.39999999999999 H290.9 Q288.9,70.39999999999999 288.9,72.19999999999999" stroke="#626060" fill="none" stroke-width="1.0" />
<path d="M289.4,69.5 H304.0" stroke="#b5b3b1" fill="none" stroke-width="0.9" />
<circle cx="295.6" cy="61.2" r="3.9" fill="#fff" stroke="#3a96dd" stroke-width="1.3"/>
<path d="M298.4,64.1 L302,68" stroke="#3a96dd" fill="none" stroke-width="1.5" />
<path d="M332.6,55.2 Q332.6,53.6 334.20000000000005,53.6 H347.40000000000003 Q348.20000000000005,53.6 348.20000000000005,54.4 V74.1 H334.6 Q332.6,74.1 332.6,72.1 Z" stroke="#626060" fill="#fff" stroke-width="1.0" />
<path d="M348.20000000000005,70.39999999999999 H334.6 Q332.6,70.39999999999999 332.6,72.19999999999999" stroke="#626060" fill="none" stroke-width="1.0" />
<path d="M333.1,69.5 H347.70000000000005" stroke="#b5b3b1" fill="none" stroke-width="0.9" />
<ellipse cx="340.3" cy="63.1" rx="3.7" ry="5.7" fill="#fff" stroke="#4aa564" stroke-width="1.35"/>
<path d="M336.6,63.1 H344" stroke="#4aa564" fill="none" stroke-width="1.3" />
<path d="M376.3,55.2 Q376.3,53.6 377.90000000000003,53.6 H391.1 Q391.90000000000003,53.6 391.90000000000003,54.4 V74.1 H378.3 Q376.3,74.1 376.3,72.1 Z" stroke="#626060" fill="#fff" stroke-width="1.0" />
<path d="M391.90000000000003,70.39999999999999 H378.3 Q376.3,70.39999999999999 376.3,72.19999999999999" stroke="#626060" fill="none" stroke-width="1.0" />
<path d="M376.8,69.5 H391.40000000000003" stroke="#b5b3b1" fill="none" stroke-width="0.9" />
<rect x="379.9" y="61" width="2" height="2" fill="#e8403c"/>
<rect x="383.5" y="61" width="2" height="2" fill="#e8403c"/>
<rect x="387.1" y="61" width="2" height="2" fill="#e8403c"/>
<path d="M441.6,53.5 H450.9 V74 H441.2 L431.4,64.4 Z" stroke="#626060" fill="#f3f2f1" stroke-width="1.05" stroke-linejoin="round"/>
<circle cx="446.9" cy="57.4" r="1" fill="#626060"/>
<rect x="444.4" y="64.8" width="8.6" height="10.6" fill="#fff" stroke="#626060" stroke-width="1"/>
<rect x="446" y="67" width="2.4" height="2.2" fill="#2b88d8"/>
<path d="M449.2,68.1 H451.6" stroke="#7cb8ea" fill="none" stroke-width="1" />
<rect x="446" y="70.5" width="2.4" height="2.2" fill="#2b88d8"/>
<path d="M449.2,71.6 H451.6" stroke="#7cb8ea" fill="none" stroke-width="1" />
<path d="M463.3,58.699999999999996 L469.2,53.199999999999996 H474.2 V57.9 L468,63.8 Z" stroke="#626060" fill="#f3f2f1" stroke-width="1.0" stroke-linejoin="round"/>
<circle cx="472.2" cy="55.199999999999996" r="0.7" fill="#626060"/>
<path d="M465.8,59 L471.4,55.2 M467.7,60.9 L472.7,57.1" stroke="#626060" fill="none" stroke-width="0.8" />
<path d="M463.3,76.5 L469.2,71.0 H474.2 V75.7 L468,81.60000000000001 Z" stroke="#b9b7b5" fill="#f3f2f1" stroke-width="1.0" stroke-linejoin="round"/>
<circle cx="472.2" cy="73.0" r="0.7" fill="#b9b7b5"/>
<rect x="463.3" y="89.7" width="11.2" height="9.6" fill="#fff" stroke="#626060" stroke-width="1"/>
<path d="M463.3,92.7 H474.5 M467.2,89.7 V92.7 M470.9,89.7 V92.7" stroke="#626060" fill="none" stroke-width="0.9" />
<rect x="463.3" y="92.9" width="6.6" height="6.4" fill="#2b7cd3"/>
<path d="M463.3,96 H470 M467.2,93 V99.2" stroke="#8fc3f0" fill="none" stroke-width="0.8" />
<path d="M468.6,97.2 L471.6,94.4 H475.2 V97.4 L472,100.6 Z" stroke="#626060" fill="#fff" stroke-width="0.95" stroke-linejoin="round"/>
<rect x="581.3" y="53.5" width="5.6" height="7.2" fill="#fff" stroke="#626060" stroke-width="1"/>
<path d="M581.3,57.1 H586.9" stroke="#626060" fill="none" stroke-width="1" />
<rect x="587.6" y="60.8" width="5.3" height="3.8" fill="#fff" stroke="#626060" stroke-width="1"/>
<path d="M585.6,58.6 L589.4,62.2" stroke="#2b88d8" fill="none" stroke-width="1.1" />
<path d="M590.4,63.2 L587.6,62.6 L589.8,60.4 Z" stroke="none" fill="#2b88d8" stroke-width="1" />
<rect x="581.3" y="71.2" width="5.6" height="3.4" fill="#fff" stroke="#626060" stroke-width="1"/>
<rect x="587.4" y="74.6" width="5.5" height="7.8" fill="#fff" stroke="#626060" stroke-width="1"/>
<path d="M587.4,78.5 H592.9" stroke="#626060" fill="none" stroke-width="1" />
<path d="M585,73.2 L588.6,76.6" stroke="#2b88d8" fill="none" stroke-width="1.1" />
<path d="M589.8,77.8 L586.9,77.2 L589.2,75 Z" stroke="none" fill="#2b88d8" stroke-width="1" />
<path d="M583,90.2 H590 M583,90.2 V97.6 M583,93.8 H586.4" stroke="#2b88d8" fill="none" stroke-width="1.2" />
<path d="M592,90.2 L589.2,88.2 V92.2 Z" stroke="none" fill="#2b88d8" stroke-width="1" />
<path d="M583,99.8 L580.9,97 H585.1 Z" stroke="none" fill="#2b88d8" stroke-width="1" />
<path d="M587.8,95.2 L592.8,100.2 M592.8,95.2 L587.8,100.2" stroke="#e8484a" fill="none" stroke-width="1.1" />
<path d="M685.2,53.6 H676.4 V61.4 M676.6,61.2 L685,53.8" stroke="#626060" fill="none" stroke-width="1.0" />
<path d="M682,71.6 L687.2,81 H676.8 Z" stroke="#f7941d" fill="#fde9cf" stroke-width="1.2" stroke-linejoin="round"/>
<path d="M682,74.4 V78" stroke="#5a4a3a" fill="none" stroke-width="1.2" />
<path d="M680.6,80 L683,82.4 L687.8,77.4" stroke="#3fae5a" fill="none" stroke-width="1.2" />
<circle cx="682.5" cy="94" r="5.9" fill="none" stroke="#626060" stroke-width="1"/>
<path d="M69.5,134.5 H74.7 L72.1,137.6 Z" stroke="none" fill="#606060" stroke-width="1" />
<rect x="90.2" y="133.2" width="1" height="1.2" fill="#a6a6a6"/>
<rect x="90.2" y="136" width="1" height="1.2" fill="#a6a6a6"/>
<rect x="90.2" y="138.8" width="1" height="1.2" fill="#a6a6a6"/>
<path d="M113.8,134 L118.6,139.4 M118.6,134 L113.8,139.4" stroke="#b0b0b0" fill="none" stroke-width="0.9" />
<path d="M139.6,137.2 L141.6,139.6 L146.2,133.8" stroke="#b0b0b0" fill="none" stroke-width="0.9" />
<path d="M16.3,157 V165.4 H7.9 Z" stroke="none" fill="#b4b4b4" stroke-width="1" />
</svg>
</div>
</body>
</html>
